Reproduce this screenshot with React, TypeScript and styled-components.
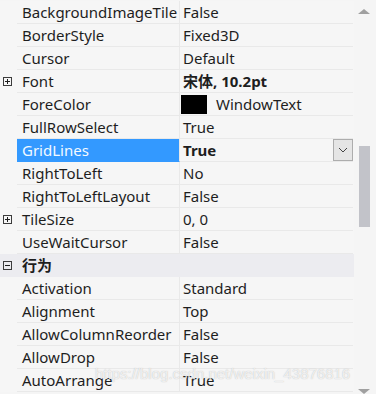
import React from "react";
import styled, { createGlobalStyle } from "styled-components";

const GlobalStyle = createGlobalStyle`
  html, body {
    margin: 0;
    padding: 0;
    background: #f5f5f5;
  }
  body {
    font-family: "Noto Sans", "Noto Sans CJK SC", sans-serif;
    color: #1e1e1e;
  }
`;

const Frame = styled.div`
  position: relative;
  display: flex;
  width: 376px;
  height: 394px;
  overflow: hidden;
  background: #f5f5f5;
`;

const Grid = styled.div`
  display: flex;
  flex-direction: column;
  width: 354px;
  padding-top: 1px;
`;

const Row = styled.div<{ $category?: boolean }>`
  display: grid;
  grid-template-columns: 17px 163px 173px;
  height: 23px;
  background: ${(p) => (p.$category ? "#ececf0" : "#f6f6f6")};
  font-size: 15px;
  line-height: 23px;
`;

const Margin = styled.div`
  display: flex;
  align-items: center;
  justify-content: center;
  padding-right: 2px;
`;

const Expander = styled.div<{ $open?: boolean }>`
  position: relative;
  width: 9px;
  height: 9px;
  box-sizing: border-box;
  border: 1px solid #3c3c3c;
  &::before {
    content: "";
    position: absolute;
    left: 1px;
    top: 3px;
    width: 5px;
    height: 1px;
    background: #1e1e1e;
  }
  &::after {
    content: "";
    display: ${(p) => (p.$open ? "none" : "block")};
    position: absolute;
    left: 3px;
    top: 1px;
    width: 1px;
    height: 5px;
    background: #1e1e1e;
  }
`;

const NameCell = styled.div<{ $selected?: boolean }>`
  padding-left: 5px;
  white-space: nowrap;
  overflow: hidden;
  border-bottom: 1px solid ${(p) => (p.$selected ? "#3399ff" : "#e9e9e9")};
  border-right: 1px solid #e9e9e9;
  background: ${(p) => (p.$selected ? "#3399ff" : "transparent")};
  color: ${(p) => (p.$selected ? "#f4f9ff" : "inherit")};
`;

const CategoryCell = styled.div`
  grid-column: 2 / 4;
  padding-left: 5px;
  font-weight: 700;
  font-size: 15px;
`;

const ValueCell = styled.div<{ $bold?: boolean }>`
  display: flex;
  align-items: center;
  padding-left: 3px;
  white-space: nowrap;
  overflow: hidden;
  border-bottom: 1px solid #e9e9e9;
  font-weight: ${(p) => (p.$bold ? 700 : 400)};
`;

const Swatch = styled.span`
  display: inline-block;
  width: 26px;
  height: 19px;
  background: #000;
  margin: 0 9px 0 -2px;
`;

const DropButton = styled.div`
  margin-left: auto;
  width: 20px;
  height: 22px;
  box-sizing: border-box;
  border: 1px solid #adadad;
  background: #e5e5e5;
  display: flex;
  align-items: center;
  justify-content: center;
`;

const ScrollTrack = styled.div`
  position: relative;
  width: 22px;
  background: #f5f5f5;
`;

const Thumb = styled.div`
  position: absolute;
  left: 5px;
  top: 146px;
  width: 11px;
  height: 81px;
  background: #c2c3c9;
`;

const Arrow = styled.div<{ $down?: boolean }>`
  position: absolute;
  left: 4px;
  ${(p) => (p.$down ? "bottom: 0px;" : "top: 9px;")}
  width: 0;
  height: 0;
  border-left: 6px solid transparent;
  border-right: 6px solid transparent;
  ${(p) =>
    p.$down ? "border-top: 5px solid #a0a0a0;" : "border-bottom: 5px solid #a0a0a0;"}
`;

const Watermark = styled.div`
  position: absolute;
  left: 95px;
  top: 365px;
  font-family: "Liberation Sans", Arial, sans-serif;
  font-size: 15px;
  color: rgba(255, 255, 255, 0.75);
  text-shadow: 0 0 1px rgba(120, 120, 120, 0.5);
  pointer-events: none;
  white-space: nowrap;
`;

type Prop = {
  name: string;
  value?: string;
  expandable?: boolean;
  bold?: boolean;
  swatch?: boolean;
  selected?: boolean;
  category?: boolean;
};

const props: Prop[] = [
  { name: "BackgroundImageTile", value: "False" },
  { name: "BorderStyle", value: "Fixed3D" },
  { name: "Cursor", value: "Default" },
  { name: "Font", value: "宋体, 10.2pt", expandable: true, bold: true },
  { name: "ForeColor", value: "WindowText", swatch: true },
  { name: "FullRowSelect", value: "True" },
  { name: "GridLines", value: "True", bold: true, selected: true },
  { name: "RightToLeft", value: "No" },
  { name: "RightToLeftLayout", value: "False" },
  { name: "TileSize", value: "0, 0", expandable: true },
  { name: "UseWaitCursor", value: "False" },
  { name: "行为", category: true },
  { name: "Activation", value: "Standard" },
  { name: "Alignment", value: "Top" },
  { name: "AllowColumnReorder", value: "False" },
  { name: "AllowDrop", value: "False" },
  { name: "AutoArrange", value: "True" },
];

export default function App() {
  return (
    <>
      <GlobalStyle />
      <Frame>
        <Grid>
          {props.map((p) =>
            p.category ? (
              <Row key={p.name} $category>
                <Margin>
                  <Expander $open />
                </Margin>
                <CategoryCell>{p.name}</CategoryCell>
              </Row>
            ) : (
              <Row key={p.name}>
                <Margin>{p.expandable && <Expander />}</Margin>
                <NameCell $selected={p.selected}>{p.name}</NameCell>
                <ValueCell $bold={p.bold}>
                  {p.swatch && <Swatch />}
                  {p.value}
                  {p.selected && (
                    <DropButton>
                      <svg width="10" height="6" viewBox="0 0 10 6">
                        <path d="M1 1 L5 5 L9 1" fill="none" stroke="#444" strokeWidth="1" />
                      </svg>
                    </DropButton>
                  )}
                </ValueCell>
              </Row>
            )
          )}
        </Grid>
        <ScrollTrack>
          <Arrow />
          <Thumb />
          <Arrow $down />
        </ScrollTrack>
        <Watermark>https://blog.csdn.net/weixin_43876816</Watermark>
      </Frame>
    </>
  );
}
